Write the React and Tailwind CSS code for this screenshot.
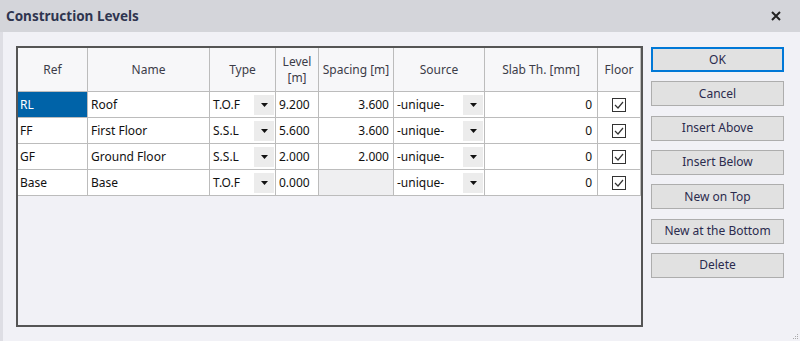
import React from "react";

const rows = [
    { ref: "RL", name: "Roof", type: "T.O.F", level: "9.200", spacing: "3.600", source: "-unique-", slab: "0", selected: true },
    { ref: "FF", name: "First Floor", type: "S.S.L", level: "5.600", spacing: "3.600", source: "-unique-", slab: "0" },
    { ref: "GF", name: "Ground Floor", type: "S.S.L", level: "2.000", spacing: "2.000", source: "-unique-", slab: "0" },
    { ref: "Base", name: "Base", type: "T.O.F", level: "0.000", spacing: "", source: "-unique-", slab: "0", disabled: true },
];

const buttons = ["Cancel", "Insert Above", "Insert Below", "New on Top", "New at the Bottom", "Delete"];

const cell = "h-[26px] border-r border-b border-[#bcbcbc] flex items-center";
const head = "h-[44px] border-r border-b border-[#bcbcbc] bg-[#f7f7f9] flex items-center justify-center text-center text-[#3c3c48] leading-[16px]";

const Arrow = () => (
    <div className="w-[20px] h-[20px] bg-[#ececec] flex items-center justify-center">
        <svg width="7" height="4" viewBox="0 0 7 4">
            <path d="M0 0 L7 0 L3.5 4 Z" fill="#111" />
        </svg>
    </div>
);

const Check = () => (
    <div className="w-[14px] h-[14px] border border-[#333] bg-white flex items-center justify-center">
        <svg width="10" height="8" viewBox="0 0 10 8">
            <path d="M1 4 L4 7 L9 1" fill="none" stroke="#333" strokeWidth="1.2" />
        </svg>
    </div>
);

const App = () => {
    return (
        <div className="w-[800px] h-[341px] flex flex-col bg-[#f1f1f6] overflow-hidden text-[12px]" style={{ fontFamily: '"Noto Sans", sans-serif' }}>
            {/* title bar */}
            <div className="h-[32px] shrink-0 bg-[#d4d5da] flex items-center justify-between pl-[6px] pr-[19px]">
                <span className="font-bold text-[13.5px] text-[#2f3550]">Construction Levels</span>
                <svg width="10" height="10" viewBox="0 0 10 10">
                    <path d="M1 1 L9 9 M9 1 L1 9" stroke="#222" strokeWidth="2" />
                </svg>
            </div>

            <div className="flex-1 flex border-l-[3px] border-[#dedee4] pl-[13px] pt-[14px] relative">
                {/* grid */}
                <div className="w-[627px] h-[281px] border-2 border-[#555] bg-[#f1f1f6] shrink-0">
                    <div className="grid grid-cols-[70px_122px_66px_43px_75px_91px_113px_43px]">
                        <div className={head}>Ref</div>
                        <div className={head}>Name</div>
                        <div className={head}>Type</div>
                        <div className={head}>Level<br />[m]</div>
                        <div className={head}>Spacing [m]</div>
                        <div className={head}>Source</div>
                        <div className={head}>Slab Th. [mm]</div>
                        <div className={head}>Floor</div>

                        {rows.map((r) => (
                            <React.Fragment key={r.ref}>
                                <div className={`${cell} pl-[2px] ${r.selected ? "bg-[#0063a8] text-white" : "bg-white text-[#111]"}`}>{r.ref}</div>
                                <div className={`${cell} bg-white pl-[3px] text-[#111]`}>{r.name}</div>
                                <div className={`${cell} bg-white pl-[3px] pr-[1px] justify-between text-[#111]`}>
                                    <span>{r.type}</span>
                                    <Arrow />
                                </div>
                                <div className={`${cell} bg-white pl-[3px] text-[#111]`}>{r.level}</div>
                                <div className={`${cell} ${r.disabled ? "bg-[#efeff1]" : "bg-white"} justify-end pr-[4px] text-[#111]`}>{r.spacing}</div>
                                <div className={`${cell} bg-white pl-[3px] pr-[1px] justify-between text-[#111]`}>
                                    <span>{r.source}</span>
                                    <Arrow />
                                </div>
                                <div className={`${cell} bg-white justify-end pr-[5px] text-[#111]`}>{r.slab}</div>
                                <div className={`${cell} bg-white justify-center`}>
                                    <Check />
                                </div>
                            </React.Fragment>
                        ))}
                    </div>
                </div>

                {/* buttons */}
                <div className="flex flex-col gap-[9.33px] ml-[8px] pt-[1px]">
                    <button className="w-[133px] h-[25px] bg-[#e1e1e1] border-2 border-[#0078d7] text-[#2b2b4e]">OK</button>
                    {buttons.map((b) => (
                        <button key={b} className="w-[133px] h-[25px] bg-[#e1e1e1] border border-[#adadad] text-[#2b2b4e]">{b}</button>
                    ))}
                </div>

                {/* resize grip */}
                <svg className="absolute right-[1px] bottom-[1px]" width="8" height="8" viewBox="0 0 8 8">
                    <rect x="6" y="2" width="1" height="1" fill="#aaa" />
                    <rect x="4" y="4" width="1" height="1" fill="#aaa" />
                    <rect x="6" y="4" width="1" height="1" fill="#aaa" />
                    <rect x="2" y="6" width="1" height="1" fill="#aaa" />
                    <rect x="4" y="6" width="1" height="1" fill="#aaa" />
                    <rect x="6" y="6" width="1" height="1" fill="#aaa" />
                </svg>
            </div>
        </div>
    );
};

export default App;
